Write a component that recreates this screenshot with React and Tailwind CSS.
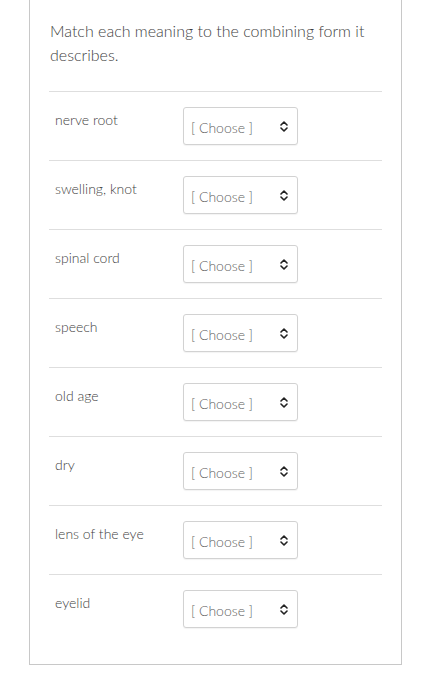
const rows = [
  'nerve root',
  'swelling, knot',
  'spinal cord',
  'speech',
  'old age',
  'dry',
  'lens of the eye',
  'eyelid',
];

function Chevrons() {
  return (
    <svg width="8" height="11" viewBox="0 0 8 11" fill="none" stroke="#222" strokeWidth="1.6" strokeLinecap="round" strokeLinejoin="round">
      <path d="M1 4 L4 1 L7 4" />
      <path d="M1 7 L4 10 L7 7" />
    </svg>
  );
}

function Row({ label }) {
  return (
    <div className="flex items-start border-t border-[#dedede] pt-[15px] pb-[15px]">
      <div className="w-[134px] pl-[6px] pt-[3px] text-[14px] leading-[20px] font-light text-[#3f3f3f]">{label}</div>
      <div className="flex h-[38px] w-[115px] items-center justify-between rounded-[3px] border border-[#d2d2d2] bg-white pl-[7px] pr-[9px] shadow-[0_1px_1px_rgba(0,0,0,0.05)]">
        <span className="pt-[2px] text-[14px] font-light text-[#5f5f5f]">[ Choose ]</span>
        <Chevrons />
      </div>
    </div>
  );
}

export default function App() {
  return (
    <div className="min-h-[700px] w-[431px] bg-white font-['Lato','Open_Sans',sans-serif]">
      <div className="ml-[29px] w-[373px] border border-t-0 border-[#c8c8c8] px-[19px] pt-[19px] pb-[21px]">
        <p className="mb-[24px] pl-[1px] text-[16px] leading-[24px] font-light text-[#3f3f3f]">
          Match each meaning to the combining form it describes.
        </p>
        {rows.map((r) => (
          <Row key={r} label={r} />
        ))}
      </div>
    </div>
  );
}
